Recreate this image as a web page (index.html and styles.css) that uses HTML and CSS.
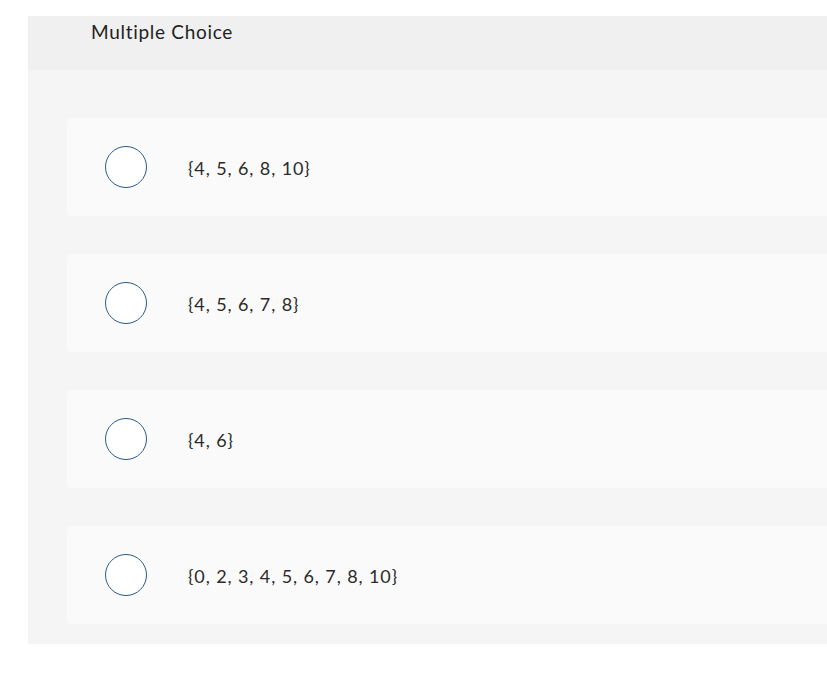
FILE: index.html
```html
<!DOCTYPE html>
<html>
<head>
<meta charset="utf-8">
<link rel="stylesheet" href="styles.css">
</head>
<body>
<div class="panel">
  <div class="panel-header">Multiple Choice</div>
  <div class="panel-body">
    <div class="choice"><span class="radio"></span><span class="label">{4, 5, 6, 8, 10}</span></div>
    <div class="choice"><span class="radio"></span><span class="label">{4, 5, 6, 7, 8}</span></div>
    <div class="choice"><span class="radio"></span><span class="label">{4, 6}</span></div>
    <div class="choice"><span class="radio"></span><span class="label">{0, 2, 3, 4, 5, 6, 7, 8, 10}</span></div>
  </div>
</div>
</body>
</html>
```
FILE: styles.css
```css
html, body {
  margin: 0;
  background: #ffffff;
}
body {
  padding: 16px 0 0 28px;
  font-family: Lato, "Open Sans", sans-serif;
  color: #2b2b2b;
}
.panel {
  width: auto;
}
.panel-header {
  background: #f0f0f0;
  height: 54px;
  box-sizing: border-box;
  padding: 4px 0 0 63px;
  font-size: 19px;
  line-height: 24px;
  letter-spacing: 0.7px;
  color: #222;
}
.panel-body {
  background: #f5f5f5;
  padding: 48px 0 20px 39px;
  display: flex;
  flex-direction: column;
  gap: 38px;
}
.choice {
  background: #fafafa;
  height: 98px;
  border-radius: 5px 0 0 5px;
  display: flex;
  align-items: center;
  padding-left: 38px;
}
.radio {
  width: 42px;
  height: 42px;
  box-sizing: border-box;
  border: 1.5px solid #2d5b88;
  border-radius: 50%;
  background: #fff;
  flex: none;
}
.label {
  margin-left: 41px;
  padding-top: 2px;
  font-size: 18px;
  letter-spacing: 0.9px;
  color: #2b2b2b;
}
```
